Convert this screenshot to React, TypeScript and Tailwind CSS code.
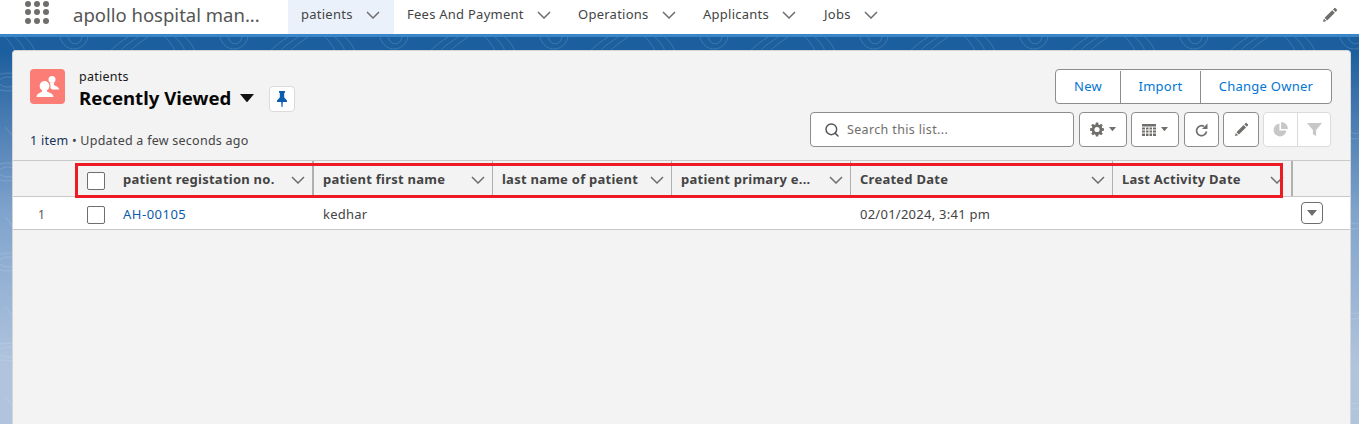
import React from "react";
import { Search } from "lucide-react";

const Chev = ({ className = "" }: { className?: string }) => (
  <svg width="14" height="8" viewBox="0 0 14 8" className={className} fill="none">
    <path d="M1 1l6 6 6-6" stroke="#706e6b" strokeWidth="1.500" />
  </svg>
);

const Caret = ({ w = 7, color = "#706e6b" }: { w?: number; color?: string }) => (
  <svg width={w} height={w * 0.6} viewBox="0 0 10 6">
    <path d="M0 0h10L5 6z" fill={color} />
  </svg>
);

const PencilFill = ({ color = "#706e6b", size = 16 }: { color?: string; size?: number }) => (
  <svg width={size} height={size} viewBox="0 0 16 16">
    <path d="M12.200 1.200a1 1 0 0 1 1.400 0l1.200 1.200a1 1 0 0 1 0 1.400l-1.200 1.200-2.600-2.600zM10.200 3.200l2.600 2.600-7.600 7.600-2.600-2.600zM1.900 11.600l2.500 2.500-3.400.9z" fill={color} />
  </svg>
);

const Gear = () => (
  <svg width="14" height="15" viewBox="0 0 24 26">
    <path fillRule="evenodd" fill="#706e6b" d="M10 1h4l.6 3.200 1.900.8L19.200 3 22 5.800 20.100 8.500l.8 1.900L24 11v4l-3.100.6-.8 1.900L22 20.200 19.200 23l-2.700-1.900-1.900.8L14 25h-4l-.6-3.100-1.900-.8L4.800 23 2 20.200l1.900-2.700-.8-1.900L0 15v-4l3.100-.6.8-1.900L2 5.800 4.800 3l2.700 2 1.900-.8zM12 8.500a4.500 4.500 0 1 0 0 9 4.500 4.500 0 0 0 0-9z" />
  </svg>
);

const TableIcon = () => (
  <svg width="14" height="14" viewBox="0 0 14 14">
    <path fill="#706e6b" d="M0 0h14v2.500H0zM0 3.500h3v2H0zM4 3.500h2.500v2H4zM7.500 3.500H10v2H7.500zM11 3.500h3v2h-3zM0 6.500h3v2H0zM4 6.500h2.500v2H4zM7.500 6.500H10v2H7.500zM11 6.500h3v2h-3zM0 9.500h3V12H0zM4 9.500h2.500V12H4zM7.500 9.500H10V12H7.500zM11 9.500h3V12h-3z" transform="translate(0 1)" />
  </svg>
);

const Refresh = () => (
  <svg width="16" height="16" viewBox="0 0 16 16" fill="none">
    <path d="M12.500 9.500A5 5 0 1 1 10 4.300" stroke="#706e6b" strokeWidth="1.700" />
    <path d="M13.500 1.500v5.500H8z" fill="#706e6b" />
  </svg>
);

const Pie = () => (
  <svg width="15" height="15" viewBox="0 0 14 14">
    <path d="M6 1.500a6 6 0 1 0 6.500 6.500H6z" fill="#c9c7c5" />
    <path d="M7.500 0a6.500 6.500 0 0 1 6.500 6.500H7.500z" fill="#c9c7c5" />
  </svg>
);

const Pin = () => (
  <svg width="10" height="16" viewBox="0 0 10 16">
    <path d="M2 0h6v1.500L7.200 2v4.500L10 9.500V11H5.800L5.500 16h-1l-.3-5H0V9.500l2.800-3V2L2 1.500z" fill="#0b5cab" />
  </svg>
);

const IconBtn = ({ children, className = "" }: { children: React.ReactNode; className?: string }) => (
  <div className={`flex h-[35px] items-center justify-center rounded border border-[#8f8d8b] bg-white ${className}`}>
    {children}
  </div>
);

const headers: { label: string; w: string; strong?: boolean }[] = [
  { label: "patient registation no.", w: "w-[200px]", strong: true },
  { label: "patient first name", w: "w-[179px]" },
  { label: "last name of patient", w: "w-[179px]" },
  { label: "patient primary e...", w: "w-[179px]" },
  { label: "Created Date", w: "w-[262px]" },
  { label: "Last Activity Date", w: "w-[180px]", strong: true },
];

const navItems = [
  { label: "Fees And Payment", w: "w-[171px]" },
  { label: "Operations", w: "w-[125px]" },
  { label: "Applicants", w: "w-[121px]" },
  { label: "Jobs", w: "w-[80px]" },
];

export default function App() {
  return (
    <div className="relative h-[424px] w-[1359px] overflow-hidden bg-white text-[13px] tracking-[0.25px] text-[#444444] [font-family:'Noto_Sans',sans-serif]">
      <nav className="flex h-[34px] items-center bg-white">
        <div className="ml-[25px] grid h-[34px] w-[24px] -translate-y-[5px] grid-cols-3 content-center gap-[2.500px]">
          {Array.from({ length: 9 }).map((_, i) => (
            <span key={i} className="h-[6px] w-[6px] rounded-full bg-[#706e6b]" />
          ))}
        </div>
        <div className="ml-[24px] w-[215px] -translate-y-[2px] text-[18.500px] tracking-normal whitespace-nowrap text-[#555555]">apollo hospital man...</div>
        <div className="flex h-[34px] w-[106px] items-center justify-between bg-[#eaf1fb] pr-[14px] pl-[13px]">
          <span className="-translate-y-[2px]">patients</span>
          <Chev className="-translate-y-[2px]" />
        </div>
        {navItems.map((n) => (
          <div key={n.label} className={`flex h-[34px] items-center pl-[13px] ${n.w}`}>
            <span className="-translate-y-[2px] whitespace-nowrap">{n.label}</span>
            <Chev className="ml-[13px] -translate-y-[2px]" />
          </div>
        ))}
        <div className="mr-[21px] ml-auto -translate-y-[2px]">
          <PencilFill size={16} />
        </div>
      </nav>
      <div className="relative h-[390px] border-t-[3px] border-[#3b85c9] bg-gradient-to-b from-[#1b5f9e] from-[4%] via-[#7fa3cc] via-[45%] to-[#b0c4de] to-[85%]">
        <svg className="absolute inset-0 h-full w-full" aria-hidden="true">
          <defs>
            <pattern id="topo" width="160" height="90" patternUnits="userSpaceOnUse">
              <g fill="none" stroke="#ffffff" strokeOpacity="0.14" strokeWidth="1">
                <path d="M5 0c6 6 10 12 12 20M15 0c6 6 10 12 12 20M25 0c6 6 10 12 12 20" />
                <path d="M60 0c4 16 24 16 28 0M68 0c3 9 12 9 14 0" />
                <path d="M110 14c6-6 12-10 18-14M120 14c6-6 12-10 18-14M130 14c6-6 12-10 18-14" />
                <ellipse cx="8" cy="45" rx="16" ry="9" />
                <ellipse cx="8" cy="45" rx="9" ry="5" />
              </g>
            </pattern>
          </defs>
          <rect width="100%" height="100%" fill="url(#topo)" />
        </svg>
        <main className="relative mt-[13px] mr-[8px] ml-[12px] h-[400px] rounded-t border border-b-0 border-[#d4d4d4] bg-[#f3f3f3]">
          <div className="flex h-[109px] justify-between">
            <div className="pt-[18px] pl-[17px]">
              <div className="flex">
                <div className="h-[35px] w-[35px] overflow-hidden rounded bg-[#fc7d75]">
                  <svg width="35" height="35" viewBox="0 0 35 35">
                    <circle cx="22" cy="10.500" r="3.500" fill="#fff" />
                    <path d="M20 14h4v2c2 1.500 5 1.500 5 4.500h-7l-3-3z" fill="#fff" />
                    <circle cx="14.500" cy="17" r="5.500" fill="#fff" stroke="#fc7d75" strokeWidth="1.200" />
                    <path d="M12 21h5v1.500c2.500 1.500 6.500 2 6.500 5.500h-17c0-3.500 4-4 5.500-5.500z" fill="#fff" />
                  </svg>
                </div>
                <div className="ml-[14px]">
                  <div className="-mt-[1px] h-[17px] text-[12.500px] leading-[17px] text-[#181818]">patients</div>
                  <div className="flex items-center">
                    <span className="text-[18.600px] leading-[24px] font-bold tracking-normal text-[#080707]">Recently Viewed</span>
                    <span className="ml-[9px]"><Caret w={14} color="#111111" /></span>
                    <div className="ml-[15px] flex h-[26px] w-[26px] translate-y-[1px] items-center justify-center rounded border border-[#dddbda] bg-white">
                      <Pin />
                    </div>
                  </div>
                </div>
              </div>
              <div className="mt-[20px] text-[12.500px] leading-[20px] text-[#444444]">
                <span className="text-[#16325c]">1 item</span> • Updated a few seconds ago
              </div>
            </div>
            <div className="flex w-[522px] flex-col items-end pt-[18px] pr-[19px]">
              <div className="-mr-[1px] flex h-[35px] w-[277px] rounded border border-[#8f8d8b] bg-white pt-[1px] text-[#0176d3]">
                <div className="flex w-[65px] items-center justify-center border-r border-[#8f8d8b]">New</div>
                <div className="flex w-[80px] items-center justify-center border-r border-[#8f8d8b]">Import</div>
                <div className="flex flex-1 items-center justify-center">Change Owner</div>
              </div>
              <div className="mt-[8px] flex gap-[4px]">
                <div className="flex h-[35px] w-[264px] items-center rounded border border-[#8f8d8b] bg-white pl-[13px] text-[#706e6b]">
                  <Search size={16} strokeWidth={2.200} color="#555555" />
                  <span className="ml-[7px] translate-y-[1px] text-[12.500px] tracking-[0.35px]">Search this list...</span>
                </div>
                <IconBtn className="ml-[1px] w-[48px] gap-[5px]"><Gear /><Caret /></IconBtn>
                <IconBtn className="w-[48px] gap-[5px]"><TableIcon /><Caret /></IconBtn>
                <IconBtn className="ml-[1px] w-[35px]"><Refresh /></IconBtn>
                <IconBtn className="w-[36px]"><PencilFill size={15} /></IconBtn>
                <div className="flex h-[35px] w-[68px] rounded border border-[#dddbda] bg-white">
                  <div className="flex w-[34px] items-center justify-center border-r border-[#dddbda]"><Pie /></div>
                  <div className="flex flex-1 items-center justify-center">
                    <svg width="15" height="15" viewBox="0 0 14 14"><path d="M0 1h14L8.500 7.500V13l-3-1.500v-4z" fill="#c9c7c5" /></svg>
                  </div>
                </div>
              </div>
            </div>
          </div>
          <div className="flex h-[37px] border-y border-[#c9c9c9] bg-[#f3f3f3]">
            <div className="w-[65px]" />
            <div className="flex w-[36px] items-center justify-center pt-[4px]">
              <span className="h-[18px] w-[18px] rounded-[2px] border border-[#706e6b] bg-white" />
            </div>
            {headers.map((h) => (
              <div key={h.label} className={`flex items-center justify-between border-r pt-[3px] pr-[7px] pl-[9px] ${h.w} ${h.strong ? "border-r-2 border-[#b0b0b0]" : "border-[#b0b0b0]"}`}>
                <span className="text-[13px] font-bold whitespace-nowrap text-[#444444]">{h.label}</span>
                <Chev />
              </div>
            ))}
          </div>
          <div className="flex h-[33px] items-center border-b border-[#c9c9c9] bg-white pt-[3px]">
            <div className="w-[65px] pr-[33px] text-right text-[12px] text-[#555555]">1</div>
            <div className="flex w-[36px] items-center justify-center">
              <span className="h-[18px] w-[18px] rounded-[2px] border border-[#706e6b] bg-white" />
            </div>
            <div className="w-[200px] pl-[9px] tracking-[0.5px] text-[#0b5cab]">AH-00105</div>
            <div className="w-[179px] pl-[9px]">kedhar</div>
            <div className="w-[179px]" />
            <div className="w-[179px]" />
            <div className="w-[262px] pl-[9px]">02/01/2024, 3:41 pm</div>
            <div className="w-[180px]" />
            <div className="ml-[8px] flex h-[22px] w-[22px] -translate-y-[2px] items-center justify-center rounded border border-[#706e6b]">
              <Caret w={10} />
            </div>
          </div>
        </main>
      </div>
      <div className="absolute top-[163px] left-[75px] h-[35px] w-[1208px] border-[3px] border-[#ed1c24]" />
    </div>
  );
}
